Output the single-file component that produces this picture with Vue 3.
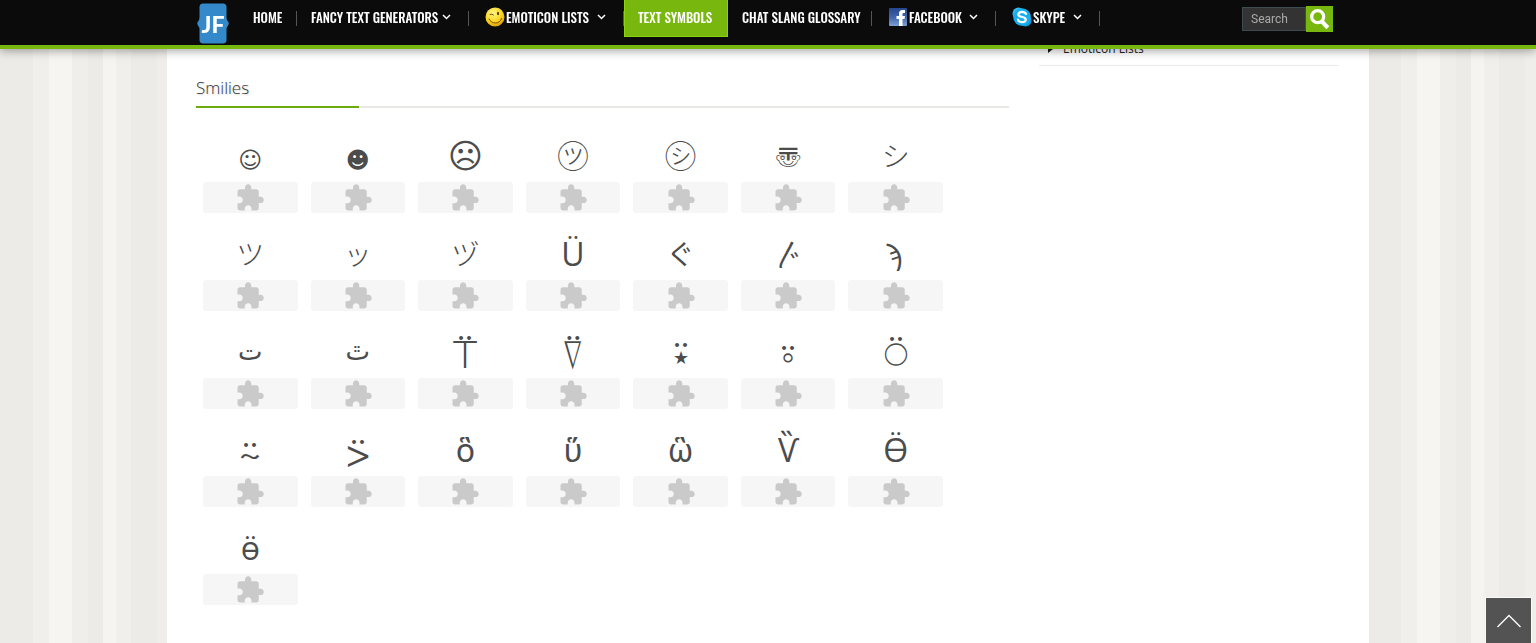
<script setup>
const nav = [
  { label: 'Home', cls: 'w-home' },
  { label: 'Fancy Text Generators', cls: 'w-fancy', menu: true },
  { label: 'Emoticon Lists', cls: 'w-emoticon', menu: true, icon: 'wink' },
  { label: 'Text Symbols', cls: 'w-symbols', active: true },
  { label: 'Chat Slang Glossary', cls: 'w-chat' },
  { label: 'Facebook', cls: 'w-facebook', menu: true, icon: 'facebook' },
  { label: 'Skype', cls: 'w-skype', menu: true, icon: 'skype' },
]

const symbols = [
  ['☺', 'face'], ['☻', 'face'], ['☹', 'bigface'], ['㋡', 'circled'], ['㋛', 'circled'], ['〠', 'postal'], ['シ', 'kana'],
  ['ツ', 'kana'], ['ッ', 'kana'], ['ヅ', 'kana'], ['Ü', ''], ['ぐ', 'kana strong'], ['〴', 'kana strong'], ['ϡ', 'sampi'],
  ['ت', 'arabic'], ['ٿ', 'arabic'], ['⍡', 'apl'], ['⍢', 'apl'], ['⍣', 'apl'], ['⍤', 'apl'], ['⍥', 'apl'],
  ['⍨', 'apl'], ['⍩', 'apl'], ['ὃ', ''], ['ὕ', ''], ['ὣ', ''], ['Ѷ', ''], ['Ӫ', ''],
  ['ӫ', ''],
]
</script>

<template>
  <div class="page">
    <header class="bar">
      <div class="bar-inner">
        <a class="logo" href="#" aria-label="JF home">
          <svg viewBox="0 0 32 41" width="32" height="41" aria-hidden="true">
            <path d="M6 .5h20q3 0 3.500 3v11q0 2 1.500 4t0 4q-1.500 2-1.500 4v11q-.5 3-3.500 3H6q-3 0-3.500-3v-11q0-2-1.500-4t0-4q1.500-2 1.500-4v-11q.5-3 3.500-3z" fill="#3389c9" />
            <text x="16" y="30" text-anchor="middle" class="logo-text">JF</text>
          </svg>
        </a>
        <nav>
          <ul>
            <li v-for="item in nav" :key="item.label" :class="item.cls">
              <a href="#" :class="{ active: item.active }">
                <svg v-if="item.icon === 'wink'" class="ico" viewBox="0 0 20 20" aria-hidden="true">
                  <defs>
                    <radialGradient id="gold" cx=".4" cy=".3" r=".75">
                      <stop offset="0" stop-color="#fff68a" /><stop offset=".6" stop-color="#fbd51c" /><stop offset="1" stop-color="#d99a06" />
                    </radialGradient>
                  </defs>
                  <circle cx="10" cy="10" r="9.500" fill="url(#gold)" />
                  <path d="M5 7.500q2-1.200 3.500 .5M4 12q2 4 6.500 4t6-4.500" fill="none" stroke="#7a4b05" stroke-width="1" stroke-linecap="round" />
                  <ellipse cx="13" cy="6.500" rx="1" ry="1.700" fill="#4a2c02" />
                </svg>
                <svg v-else-if="item.icon === 'facebook'" class="ico" viewBox="0 0 20 20" aria-hidden="true">
                  <defs>
                    <linearGradient id="fb" x2="0" y2="1">
                      <stop offset="0" stop-color="#24468f" /><stop offset=".55" stop-color="#4468ae" /><stop offset="1" stop-color="#7ea0d8" />
                    </linearGradient>
                  </defs>
                  <rect x="1" y="1" width="18" height="18" rx="1" fill="url(#fb)" />
                  <path d="M11 19v-7H8.500V9H11V6.500Q11 3 14.500 3H17v3h-1.500Q14.500 6 14.500 7v2H17l-.5 3h-2v7z" fill="#fff" />
                </svg>
                <svg v-else-if="item.icon === 'skype'" class="ico" viewBox="0 0 20 20" aria-hidden="true">
                  <circle cx="6.500" cy="6.500" r="6" fill="#35bdf2" />
                  <circle cx="13.500" cy="13.500" r="6" fill="#0a9ee0" />
                  <circle cx="10" cy="10" r="8.800" fill="#16aeee" />
                  <path d="M14 7Q13 4.800 10 4.800T6.300 7.300Q6.300 9.400 10 10t3.800 2.600q0 2.600-3.700 2.600T6 12.700" fill="none" stroke="#fff" stroke-width="2.200" stroke-linecap="round" />
                </svg>
                <span>{{ item.label }}</span>
                <svg v-if="item.menu" class="chev" viewBox="0 0 9 6" aria-hidden="true">
                  <path d="M1 1l3.500 3.500L8 1" fill="none" stroke="#fff" stroke-width="1.500" />
                </svg>
              </a>
            </li>
          </ul>
        </nav>
        <form class="search" role="search" @submit.prevent>
          <input type="text" placeholder="Search" aria-label="Search" />
          <button type="submit" aria-label="Submit search">
            <svg viewBox="0 0 26 26" width="25" height="24" aria-hidden="true">
              <circle cx="11" cy="10.500" r="6.500" fill="none" stroke="#fff" stroke-width="3.500" />
              <path d="M15.500 15.500l6.500 7" stroke="#fff" stroke-width="4.500" />
            </svg>
          </button>
        </form>
      </div>
    </header>

    <div class="sheet">
      <main>
        <h2><span>Smilies</span></h2>
        <ul class="grid">
          <li v-for="s in symbols" :key="s[0]">
            <div class="glyph" :class="s[1]">{{ s[0] }}</div>
            <button type="button" class="plugin" :aria-label="'Copy ' + s[0]">
              <svg viewBox="0 0 24 24" width="30" height="30" aria-hidden="true">
                <path fill="#cacaca" d="M20.500 11H19V7c0-1.100-.9-2-2-2h-4V3.500C13 2.120 11.880 1 10.500 1S8 2.120 8 3.500V5H4c-1.100 0-1.990.9-1.990 2v3.800H3.500c1.490 0 2.700 1.210 2.700 2.700s-1.210 2.700-2.700 2.700H2V20c0 1.100.9 2 2 2h3.800v-1.500c0-1.490 1.210-2.700 2.700-2.700 1.490 0 2.700 1.210 2.700 2.700V22H17c1.100 0 2-.9 2-2v-4h1.500c1.380 0 2.500-1.120 2.500-2.500S21.880 11 20.500 11z" />
              </svg>
            </button>
          </li>
        </ul>
      </main>
      <aside>
        <a href="#">
          <svg viewBox="0 0 5 8" width="5" height="8" aria-hidden="true"><path d="M0 0l5 4-5 4z" fill="#111" /></svg>
          <span>Emoticon Lists</span>
        </a>
      </aside>
    </div>

    <button type="button" class="to-top" aria-label="Back to top">
      <svg viewBox="0 0 26 14" width="26" height="14" aria-hidden="true">
        <path d="M1.500 13L13 1.500 24.500 13" fill="none" stroke="#fff" stroke-width="1.300" />
      </svg>
    </button>
  </div>
</template>

<style>
body { margin: 0; }
</style>

<style scoped>
* { box-sizing: border-box; }
ul { list-style: none; margin: 0; padding: 0; }
a { color: inherit; text-decoration: none; }
button { border: 0; padding: 0; cursor: pointer; }

.page {
  min-height: 100vh;
  padding-top: 40px;
  font-family: "Open Sans", "Noto Sans", sans-serif;
  background: repeating-linear-gradient(90deg,
    #edebe7 0 33px, #f0efeb 33px 49px, #f6f5f1 49px 72px, #efeeea 72px 88px,
    #edebe7 88px 103px, #f5f4f0 103px 116px, #f0efeb 116px 131px,
    #edebe7 131px 157px, #f0eeea 157px 171px);
}

.bar {
  position: fixed;
  top: 0;
  left: 0;
  right: 0;
  z-index: 2;
  height: 49px;
  background: #0b0b0b;
  border-bottom: 4px solid #78b70d;
  box-shadow: 0 2px 9px rgba(0, 0, 0, .35);
}
.bar-inner {
  display: flex;
  align-items: flex-start;
  max-width: 1142px;
  margin: 0 auto;
  padding-right: 6px;
}
.logo { width: 42px; padding-top: 3px; }
.logo svg { display: block; }
.logo-text { font: 900 23px "Lato", sans-serif; fill: #fff; }
nav { flex: 1; }
nav ul { display: flex; }
nav li a {
  position: relative;
  display: flex;
  align-items: center;
  height: 37px;
  padding: 0 0 3px 14px;
  color: #fff;
  font: 500 13px "Oswald", "Roboto Condensed", "Roboto", sans-serif;
  text-transform: uppercase;
  white-space: nowrap;
}
nav li a::after {
  content: "";
  position: absolute;
  right: 0;
  top: 11px;
  width: 1px;
  height: 15px;
  background: #555;
}
nav li a.active { background: #78b70d; border: 1px solid #8ad40d; border-top: 0; padding-left: 13px; }
.w-home { width: 58px; }
.w-fancy { width: 172px; }
.w-emoticon { width: 155px; }
.w-symbols { width: 104px; }
nav .w-symbols a::after { display: none; }
.w-chat { width: 144px; }
.w-facebook { width: 124px; }
.w-skype { width: 104px; }
.ico { flex: none; width: 20px; height: 20px; margin: 0 1px 0 2px; }
.chev { flex: none; width: 9px; height: 6px; margin-left: auto; margin-right: 18px; }
.search { display: flex; align-items: center; padding-top: 6px; }
.search input {
  width: 64px;
  height: 24px;
  padding: 0 8px;
  border: 1px solid #3d4a4f;
  border-radius: 0;
  background: #333;
  font: 12px "Roboto", sans-serif;
  color: #ccc;
}
.search input::placeholder { color: #aaa; }
.search button {
  display: grid;
  place-items: center;
  width: 27px;
  height: 26px;
  background: #78b70d;
}

.sheet {
  display: flex;
  gap: 30px;
  max-width: 1202px;
  min-height: calc(100vh - 40px);
  margin: 0 auto;
  padding: 0 30px 38px 29px;
  background: #fff;
}
main { flex: 1; padding-top: 30px; }
h2 {
  margin: 0;
  height: 38px;
  border-bottom: 2px solid #e8e8e4;
  font-size: 17px;
  font-weight: 300;
  line-height: 35px;
  color: #333;
  text-shadow: 1px 1px 2px rgba(0, 0, 0, .2);
}
h2 span {
  display: block;
  width: 20%;
  height: 38px;
  border-bottom: 2px solid #6aac0c;
}
.grid {
  display: grid;
  grid-template-columns: repeat(7, 1fr);
  column-gap: 13px;
  max-width: 753px;
  padding: 7px 6px 0 7px;
}
.glyph {
  display: flex;
  justify-content: center;
  height: 67px;
  font-size: 32px;
  line-height: 82px;
  color: #4c4c4c;
}
.face { font-family: "DejaVu Sans", sans-serif; font-size: 23px; line-height: 90px; }
.bigface { font-family: "DejaVu Sans", sans-serif; font-size: 34px; }
.circled { font-family: "Noto Sans CJK JP", sans-serif; line-height: 78px; font-weight: 300; }
.kana { font-family: "Noto Sans CJK JP", sans-serif; font-size: 28px; line-height: 80px; font-weight: 300; }
.strong { font-weight: 400; }
.postal { font-family: "Noto Sans CJK JP", sans-serif; font-size: 26px; }
.sampi { font-size: 27px; }
.arabic { font-family: "DejaVu Sans", sans-serif; font-size: 26px; line-height: 80px; }
.apl { font-family: "DejaVu Sans", sans-serif; font-size: 40px; line-height: 86px; }
.plugin {
  display: flex;
  align-items: center;
  justify-content: center;
  width: 100%;
  height: 31px;
  border-radius: 3px;
  background: #f6f6f6;
}

aside { width: 300px; }
aside a {
  display: flex;
  align-items: center;
  gap: 10px;
  height: 26px;
  padding: 0 0 8px 9px;
  border-bottom: 1px solid #ececec;
  font-size: 12px;
  color: #222;
}

.to-top {
  position: fixed;
  right: 5px;
  bottom: 0;
  display: grid;
  place-items: center;
  width: 45px;
  height: 45px;
  background: #535353;
  outline: 1px solid #fafaf8;
}
</style>
